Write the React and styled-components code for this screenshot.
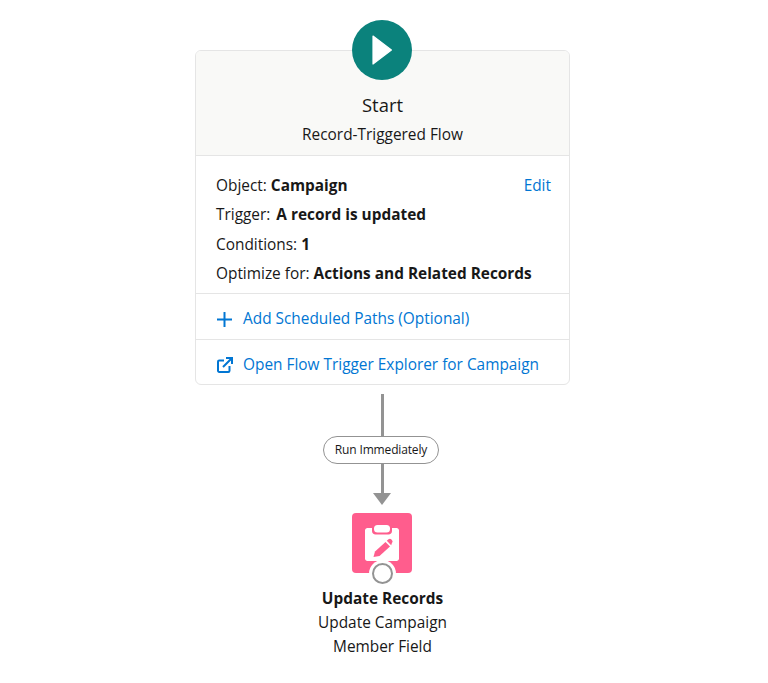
import React from 'react';
import styled, { createGlobalStyle } from 'styled-components';

const GlobalStyle = createGlobalStyle`
    html, body {
        margin: 0;
        padding: 0;
        background: #fff;
    }
    body {
        font-family: "Open Sans", "Noto Sans", "Liberation Sans", sans-serif;
        color: #181818;
    }
`

const Canvas = styled.div`
    display: flex;
    flex-direction: column;
    align-items: center;
    width: 765px;
    padding-top: 50px;
`

const Card = styled.div`
    position: relative;
    box-sizing: border-box;
    width: 375px;
    height: 335px;
    border: 1px solid #e5e5e5;
    border-radius: 6px;
    display: flex;
    flex-direction: column;
`

const StartCircle = styled.div`
    position: absolute;
    top: -31px;
    left: 156px;
    width: 60px;
    height: 60px;
    border-radius: 50%;
    background: #0b827c;
    display: flex;
    align-items: center;
    justify-content: center;
`

const CardHeader = styled.div`
    height: 105px;
    box-sizing: border-box;
    padding-top: 42px;
    background: #f9f9f7;
    border-bottom: 1px solid #e5e5e5;
    border-radius: 5px 5px 0 0;
    text-align: center;
`

const Title = styled.div`
    font-size: 18.4px;
    line-height: 24px;
`

const Subtitle = styled.div`
    font-size: 15.4px;
    line-height: 20px;
    margin-top: 8px;
`

const Details = styled.div`
    height: 138px;
    box-sizing: border-box;
    padding: 20px 18px 0 20px;
    border-bottom: 1px solid #e5e5e5;
`

const DetailRow = styled.div`
    display: flex;
    justify-content: space-between;
    font-size: 15.4px;
    line-height: 20px;
    margin-bottom: 9.4px;
`

const Label = styled.span`
    margin-right: ${props => props.$gap || 4}px;
`

const Strong = styled.b`
    font-weight: 700;
`

const LinkText = styled.a`
    color: #0176d3;
    font-size: 15.4px;
    line-height: 20px;
`

const ActionRow = styled.div`
    display: flex;
    align-items: center;
    gap: ${props => props.$gap}px;
    height: ${props => props.$height}px;
    box-sizing: border-box;
    padding: ${props => props.$top}px 0 0 21px;
    border-bottom: ${props => props.$last ? 'none' : '1px solid #e5e5e5'};
`

const PlusSvg = styled.svg`
    margin-top: 2px;
`

const Connector = styled.div`
    display: flex;
    flex-direction: column;
    align-items: center;
    margin-top: 9px;
    margin-right: 1px;
`

const Line = styled.div`
    width: 3px;
    height: ${props => props.$height}px;
    background: #939393;
`

const Pill = styled.div`
    box-sizing: border-box;
    width: 116px;
    height: 28px;
    margin-right: 2px;
    border: 1px solid #939393;
    border-radius: 14px;
    background: #fff;
    font-size: 12px;
    line-height: 26px;
    text-align: center;
    letter-spacing: -0.15px;
`

const Arrow = styled.div`
    width: 0;
    height: 0;
    border-left: 9px solid transparent;
    border-right: 9px solid transparent;
    border-top: 12px solid #939393;
`

const Node = styled.div`
    position: relative;
    width: 60px;
    height: 60px;
    margin-top: 8px;
    margin-right: 1px;
    border-radius: 4px;
    background: #ff5d8d;
    display: flex;
    align-items: center;
    justify-content: center;
`

const EndDot = styled.div`
    position: absolute;
    left: 20px;
    top: 50px;
    box-sizing: border-box;
    width: 21px;
    height: 21px;
    border-radius: 50%;
    background: #fff;
    border: 2px solid #939393;
    box-shadow: 0 0 0 3px #fff;
`

const NodeLabel = styled.div`
    margin-top: 14px;
    text-align: center;
    font-size: 15.4px;
    line-height: 24px;
`

const PlayIcon = () => (
    <svg width="20" height="30" viewBox="0 0 20 30">
        <path d="M1 1 L19.4 15 L1 29 Z" fill="#fff" stroke="#fff" strokeWidth="1.2" strokeLinejoin="round" />
    </svg>
)

const PlusIcon = () => (
    <PlusSvg width="15" height="15" viewBox="0 0 15 15">
        <path d="M7.5 0.5 V14.5 M0.5 7.5 H14.5" stroke="#0176d3" strokeWidth="2" strokeLinecap="round" fill="none" />
    </PlusSvg>
)

const ExternalIcon = () => (
    <svg width="16" height="16" viewBox="0 0 16 16" fill="none">
        <path d="M7 3.5 H2.2 A1.2 1.2 0 0 0 1 4.7 V13.8 A1.2 1.2 0 0 0 2.2 15 H11.3 A1.2 1.2 0 0 0 12.5 13.8 V9" stroke="#0176d3" strokeWidth="2" />
        <path d="M6 10 L14.5 1.5 M9 1 H15 V7" stroke="#0176d3" strokeWidth="2" />
    </svg>
)

const ClipboardIcon = () => (
    <svg width="34" height="36" viewBox="0 0 34 36">
        <path d="M2.5 3 H7 V6 C7 8 8.5 9.5 10.5 9.5 H23.5 C25.5 9.5 27 8 27 6 V3 H31.5 C32.9 3 34 4.1 34 5.5 V33.5 C34 34.9 32.9 36 31.5 36 H2.5 C1.1 36 0 34.9 0 33.5 V5.5 C0 4.1 1.1 3 2.5 3 Z" fill="#fff" />
        <rect x="9" y="0" width="16" height="7.5" rx="3.5" fill="#fff" />
        <path d="M8.5 32 L10 26.5 L20.5 17 L25 21.5 L14.5 31 Z" fill="#ff5d8d" />
        <path d="M21.8 15.8 L23.5 14.3 C24.4 13.5 25.4 13.5 26.2 14.3 L27 15.2 C27.8 16 27.8 17 27 17.8 L26.2 20.2 Z" fill="#ff5d8d" />
    </svg>
)

const App = () => {
    return (
        <Canvas>
            <GlobalStyle />
            <Card>
                <StartCircle>
                    <PlayIcon />
                </StartCircle>
                <CardHeader>
                    <Title>Start</Title>
                    <Subtitle>Record-Triggered Flow</Subtitle>
                </CardHeader>
                <Details>
                    <DetailRow>
                        <span><Label>Object:</Label><Strong>Campaign</Strong></span>
                        <LinkText>Edit</LinkText>
                    </DetailRow>
                    <DetailRow>
                        <span><Label $gap={6}>Trigger:</Label><Strong>A record is updated</Strong></span>
                    </DetailRow>
                    <DetailRow>
                        <span><Label>Conditions:</Label><Strong>1</Strong></span>
                    </DetailRow>
                    <DetailRow>
                        <span><Label>Optimize for:</Label><Strong>Actions and Related Records</Strong></span>
                    </DetailRow>
                </Details>
                <ActionRow $height={46} $top={4} $gap={11}>
                    <PlusIcon />
                    <LinkText>Add Scheduled Paths (Optional)</LinkText>
                </ActionRow>
                <ActionRow $height={44} $top={5} $gap={10} $last>
                    <ExternalIcon />
                    <LinkText>Open Flow Trigger Explorer for Campaign</LinkText>
                </ActionRow>
            </Card>
            <Connector>
                <Line $height={42} />
                <Pill>Run Immediately</Pill>
                <Line $height={29} />
                <Arrow />
            </Connector>
            <Node>
                <ClipboardIcon />
                <EndDot />
            </Node>
            <NodeLabel>
                <Strong>Update Records</Strong>
                <div>Update Campaign</div>
                <div>Member Field</div>
            </NodeLabel>
        </Canvas>
    )
}

export default App;
